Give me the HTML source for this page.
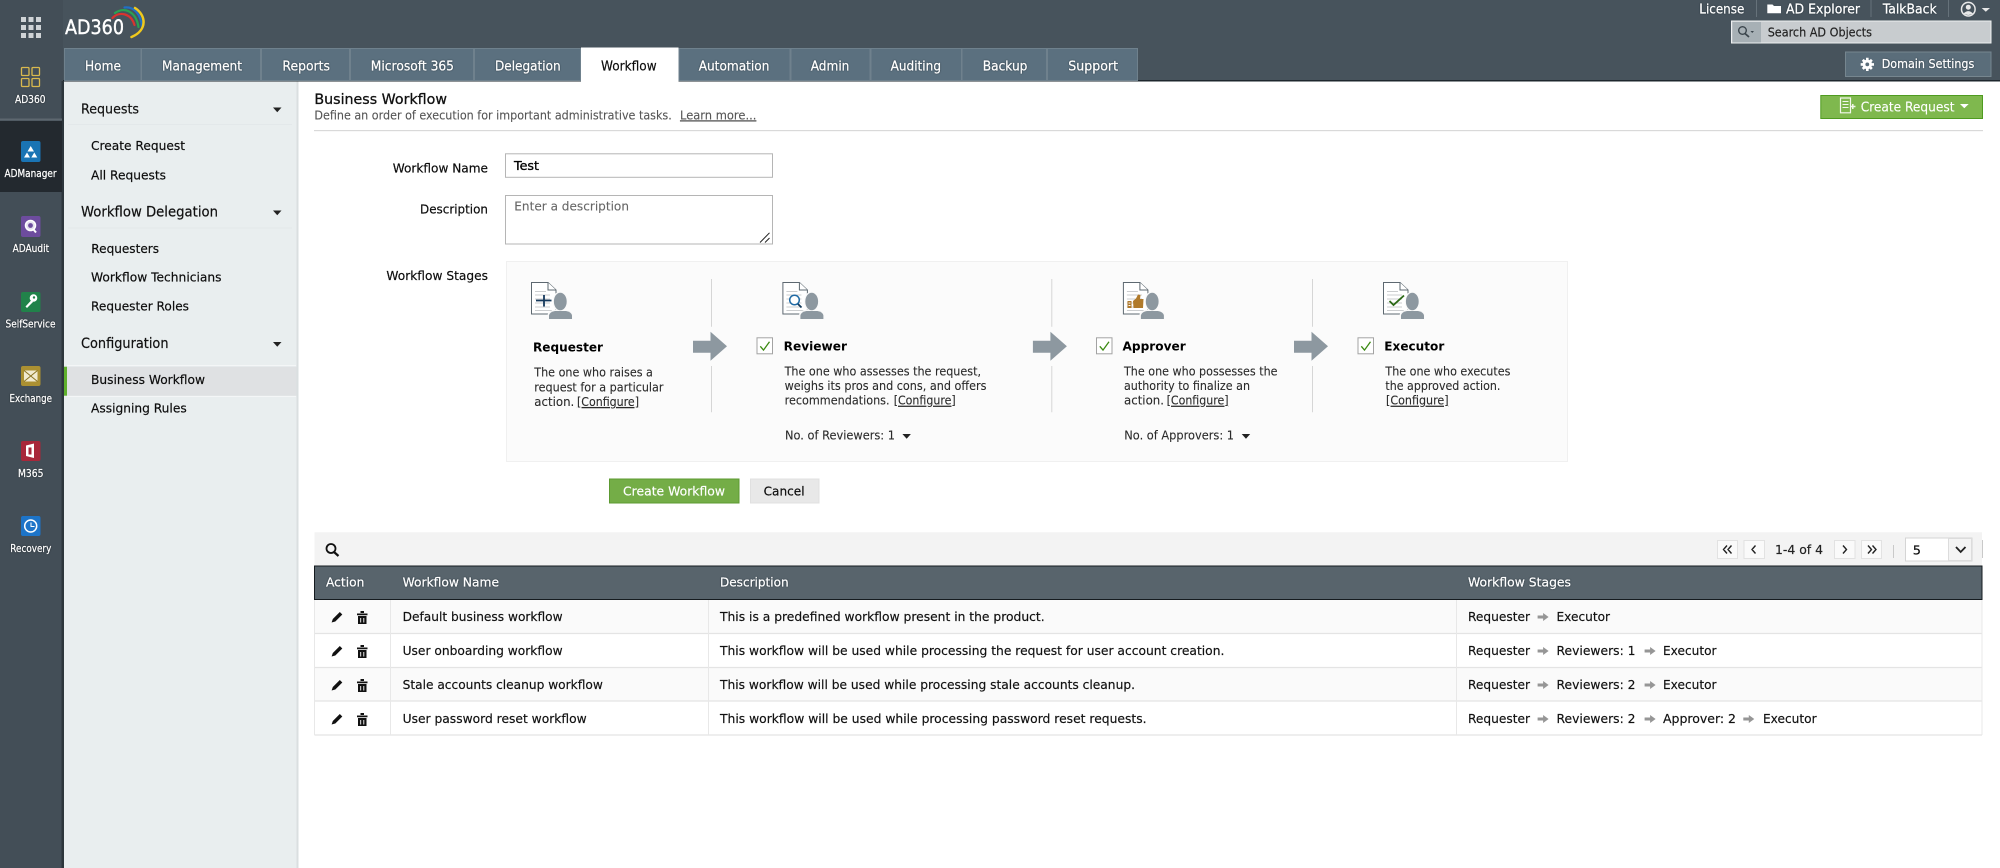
<!DOCTYPE html>
<html><head><meta charset="utf-8"><title>Business Workflow</title>
<style>
html,body{margin:0;padding:0;background:#fff;width:2000px;height:868px;overflow:hidden}
svg{display:block;filter:blur(.3px)}
text{font-family:"DejaVu Sans","Liberation Sans",sans-serif;white-space:pre}
.t{font-size:12.5px;fill:#111;stroke:#111;stroke-width:.18px}
.w{font-size:13px;fill:#fff;stroke:#fff;stroke-width:.25px;filter:drop-shadow(0 0 .7px #1d2a33)}
.r{font-size:10.5px;fill:#fff;stroke:#fff;stroke-width:.25px;filter:drop-shadow(0 0 .7px #161c20)}
.s{font-size:12.5px;fill:#0c0c0c;stroke:#0c0c0c;stroke-width:.18px}
.h{font-size:14.5px;fill:#111;stroke:#111;stroke-width:.2px}
.b{font-size:12.5px;fill:#000;font-weight:700}
.g{font-size:12px;fill:#2a2a2a;stroke:#2a2a2a;stroke-width:.1px}
.th{font-size:12.5px;fill:#fff;stroke:#fff;stroke-width:.25px;filter:drop-shadow(0 0 .7px #1d2a33)}
</style></head><body>
<svg width="2000" height="868" viewBox="0 0 2000 868" xmlns="http://www.w3.org/2000/svg">
<defs>
<g id="doc">
<path d="M.5.5H17L25 8V32H.5Z" fill="#fff" stroke="#5d6870"/><path d="M17 .5V8H25" fill="#fff" stroke="#5d6870"/>
<path d="M4 9.500H15M4 13H19M4 17H19M4 21H19M4 25H19M4 28.500H21" stroke="#cbcdcf" stroke-width="1"/>
<ellipse cx="29.300" cy="19.500" rx="7.600" ry="10" fill="#fafafa"/><path d="M16.500 38V33Q17 29 23 28H36Q41.500 29 42 33V38Z" fill="#fafafa"/>
<ellipse cx="29.300" cy="19.500" rx="6.400" ry="8.800" fill="#8d98a0"/><path d="M18 37V33.500Q18.500 30 24 29H35Q40.500 30 41 33.500V37Z" fill="#8d98a0"/>
</g>
<g id="chk"><rect x=".5" y=".5" width="15.500" height="16" fill="#fff" stroke="#a3a3a3"/><path d="M3.800 9L7 12.800L13 4.500" fill="none" stroke="#3c8a12" stroke-width="1.300"/></g>
<path id="arw" d="M0 9H17.500V0L34 14.500L17.500 29V21H0Z" fill="#8d98a0"/>
<g id="pen"><path d="M1.800 8L8.800 1L11.300 3.500L4.300 10.500L.6 11.500Z" fill="#111"/></g>
<g id="bin"><path d="M0 3.500H10.500V5.200H0ZM3.500 1H7V3H3.500ZM1 6H9.500V14H1Z" fill="#111"/><path d="M3.700 8V12.500M6.800 8V12.500" stroke="#fff" stroke-width=".9"/></g>
<path id="mini" d="M0 2.500H5.500V0L11 4L5.500 8V5.500H0Z" fill="#969696"/>
<path id="dn" d="M0 0H8.500L4.250 4.800Z" fill="#222"/>
</defs>

<!-- top bar and rail -->
<rect width="2000" height="81" fill="#47535c"/>
<rect y="80" width="2000" height="1.500" fill="#1e272d"/>
<rect y="0" width="63" height="868" fill="#434e57"/>
<rect x="61.500" y="81" width="2.500" height="787" fill="#2d363c"/>
<rect y="118.500" width="62" height="2" fill="#5d676f"/>
<rect y="121" width="62" height="71" fill="#23292f"/>

<g fill="#cfd3d6"><rect x="21" y="17" width="5" height="5"/><rect x="28.500" y="17" width="5" height="5"/><rect x="36" y="17" width="5" height="5"/><rect x="21" y="25" width="5" height="5"/><rect x="28.500" y="25" width="5" height="5"/><rect x="36" y="25" width="5" height="5"/><rect x="21" y="33" width="5" height="5"/><rect x="28.500" y="33" width="5" height="5"/><rect x="36" y="33" width="5" height="5"/></g>

<text x="65" y="34" style="font-size:19.500px;fill:#fff;stroke:#fff;stroke-width:.4px" textLength="59" lengthAdjust="spacingAndGlyphs">AD360</text>
<g fill="none" stroke-width="2.200" stroke-linecap="round">
<path d="M112.500 18C119 11 131 13 134.500 25" stroke="#d9342f"/>
<path d="M115 13C124 6.500 136 11 138.500 27" stroke="#2aa252"/>
<path d="M124.500 7.500C134 6.500 141 14 142 27" stroke="#2070c4"/>
<path d="M135 8C146 15 148 30 131.500 37" stroke="#f0c91d" stroke-width="2.500"/>
</g>

<!-- rail icons -->
<g fill="none" stroke="#d9b94e" stroke-width="1.300"><rect x="21.500" y="67.500" width="7.500" height="8" rx="1"/><rect x="32" y="67.500" width="7.500" height="8" rx="1"/><rect x="21.500" y="78.500" width="7.500" height="8" rx="1"/><rect x="32" y="78.500" width="7.500" height="8" rx="1"/></g>
<text x="15" y="103" class="r" textLength="30.500" lengthAdjust="spacingAndGlyphs">AD360</text>
<rect x="21" y="141" width="19.500" height="21" rx="2" fill="#1a74b4"/><path d="M30.700 146L34 151.500H27.500ZM27 152.500L30 157.500H24ZM34.300 152.500L37.300 157.500H31.300Z" fill="#fff"/>
<text x="4.500" y="177" class="r" textLength="52" lengthAdjust="spacingAndGlyphs">ADManager</text>
<rect x="21" y="216" width="19.500" height="21" rx="2" fill="#6d4c9e"/><circle cx="30.500" cy="225.500" r="5" fill="#e5e0ef" stroke="#fff" stroke-width="1.500"/><circle cx="30.500" cy="225.500" r="2.400" fill="#6d4c9e"/><path d="M33.500 229.500L36 232.500" stroke="#fff" stroke-width="2"/>
<text x="12.600" y="252" class="r" textLength="36.500" lengthAdjust="spacingAndGlyphs">ADAudit</text>
<rect x="21" y="292" width="19.500" height="20" rx="2" fill="#21824a"/><circle cx="33.500" cy="298" r="3.800" fill="#fff"/><path d="M31.500 300L25.500 306.500L27 308L33 302Z" fill="#fff"/><circle cx="34" cy="297.500" r="1.200" fill="#21824a"/>
<text x="5.500" y="327.700" class="r" textLength="50" lengthAdjust="spacingAndGlyphs">SelfService</text>
<rect x="21" y="366" width="19.500" height="20" rx="2" fill="#ab9032"/><rect x="24" y="370.500" width="13.500" height="11" fill="#f1ead0"/><path d="M24 370.500L37.500 381.500M37.500 370.500L24 381.500" stroke="#8a7323"/>
<text x="9.500" y="402" class="r" textLength="42.500" lengthAdjust="spacingAndGlyphs">Exchange</text>
<rect x="21" y="441" width="19.500" height="20" rx="2" fill="#a8273a"/><path d="M26 445.500L34 443.500V458L26 456Z" fill="#fff"/><rect x="28.500" y="447.500" width="3" height="7" fill="#a8273a"/>
<text x="18" y="477" class="r" textLength="25.500" lengthAdjust="spacingAndGlyphs">M365</text>
<rect x="21" y="516" width="19.500" height="20" rx="2" fill="#1d74c8"/><circle cx="30.700" cy="526" r="6" fill="none" stroke="#fff" stroke-width="1.500"/><path d="M31 522.500V526.500H34.500" fill="none" stroke="#fff"/>
<text x="10.300" y="552" class="r" textLength="41" lengthAdjust="spacingAndGlyphs">Recovery</text>

<!-- tabs -->
<g fill="#5b707f" stroke="#6f818d" stroke-width="1">
<rect x="64.500" y="48.500" width="76.500" height="32"/><rect x="141.500" y="48.500" width="119" height="32"/><rect x="261.500" y="48.500" width="88" height="32"/><rect x="350.500" y="48.500" width="123" height="32"/><rect x="474.500" y="48.500" width="106" height="32"/>
<rect x="679" y="48.500" width="111" height="32"/><rect x="791" y="48.500" width="79" height="32"/><rect x="871" y="48.500" width="90.500" height="32"/><rect x="962" y="48.500" width="84.500" height="32"/><rect x="1047.500" y="48.500" width="90" height="32"/>
</g>
<rect x="581" y="47.500" width="97.500" height="34.500" fill="#fff"/>
<text x="85" y="70.700" class="w" textLength="36" lengthAdjust="spacingAndGlyphs">Home</text>
<text x="162" y="70.700" class="w" textLength="80" lengthAdjust="spacingAndGlyphs">Management</text>
<text x="282.400" y="70.700" class="w" textLength="47.600" lengthAdjust="spacingAndGlyphs">Reports</text>
<text x="370.800" y="70.700" class="w" textLength="83.200" lengthAdjust="spacingAndGlyphs">Microsoft 365</text>
<text x="495" y="70.700" class="w" textLength="65.600" lengthAdjust="spacingAndGlyphs">Delegation</text>
<text x="601" y="70.700" class="s" style="font-size:13px" textLength="55.600" lengthAdjust="spacingAndGlyphs">Workflow</text>
<text x="698.700" y="70.700" class="w" textLength="70.700" lengthAdjust="spacingAndGlyphs">Automation</text>
<text x="810.700" y="70.700" class="w" textLength="38.700" lengthAdjust="spacingAndGlyphs">Admin</text>
<text x="890.600" y="70.700" class="w" textLength="50.400" lengthAdjust="spacingAndGlyphs">Auditing</text>
<text x="982.800" y="70.700" class="w" textLength="44.600" lengthAdjust="spacingAndGlyphs">Backup</text>
<text x="1068.300" y="70.700" class="w" textLength="49.700" lengthAdjust="spacingAndGlyphs">Support</text>

<!-- top right -->
<text x="1699.300" y="13.300" class="w" textLength="45" lengthAdjust="spacingAndGlyphs">License</text>
<path d="M1756.500 0V17M1871 0V17M1948.500 0V17" stroke="#66727a"/>
<path d="M1767.300 4.500H1772.500L1774 6H1781V13.300H1767.300Z" fill="#fff"/>
<text x="1786" y="13.300" class="w" textLength="74" lengthAdjust="spacingAndGlyphs">AD Explorer</text>
<text x="1882.700" y="13.300" class="w" textLength="54" lengthAdjust="spacingAndGlyphs">TalkBack</text>
<circle cx="1968.300" cy="9.200" r="6.800" fill="none" stroke="#e8e8e8" stroke-width="1.500"/><circle cx="1968.300" cy="7.200" r="2.500" fill="#e8e8e8"/><path d="M1963.500 13.500Q1968.300 8.800 1973 13.500Q1968.300 16.500 1963.500 13.500Z" fill="#e8e8e8"/>
<path d="M1981.700 8H1990L1985.800 11.700Z" fill="#e8e8e8"/>
<rect x="1731.500" y="21" width="259.500" height="22" fill="#c8cccf" stroke="#eef0f1"/>
<rect x="1732.500" y="22" width="28.500" height="20.500" fill="#a7b0b5"/>
<circle cx="1742.500" cy="30.500" r="3.800" fill="none" stroke="#3c464d" stroke-width="1.400"/><path d="M1745 33.500L1749 37" stroke="#3c464d" stroke-width="1.800"/><path d="M1750.500 31H1754L1752.250 33Z" fill="#3c464d"/>
<text x="1767.700" y="36.700" class="s" style="fill:#222;stroke:#222" textLength="104.300" lengthAdjust="spacingAndGlyphs">Search AD Objects</text>
<rect x="1845.500" y="52" width="145.500" height="24.500" fill="#5a6d7a" stroke="#76868f"/>
<g fill="#fff"><circle cx="1867.300" cy="64.400" r="4.800"/><path d="M1866 57.700H1868.600V71H1866ZM1860.700 63.100H1874V65.700H1860.700Z"/><path d="M1861.800 60.800L1863.700 58.900L1872.800 68L1870.900 69.900ZM1870.900 58.900L1872.800 60.800L1863.700 69.900L1861.800 68Z"/></g><circle cx="1867.300" cy="64.400" r="1.900" fill="#5a6d7a"/>
<text x="1881.700" y="68" class="w" style="font-size:12.500px" textLength="92.600" lengthAdjust="spacingAndGlyphs">Domain Settings</text>

<!-- sidebar -->
<rect x="64" y="81.500" width="233" height="787" fill="#e9eeef"/>
<rect x="296.500" y="81.500" width="2" height="787" fill="#dadfe0"/>
<text x="81" y="113.500" class="h" style="font-size:13.500px" textLength="58" lengthAdjust="spacingAndGlyphs">Requests</text>
<use href="#dn" x="273" y="107.500"/>
<path d="M68 124.500H292M68 228H292" stroke="#e3e8ea"/>
<text x="91" y="150" class="s" textLength="94" lengthAdjust="spacingAndGlyphs">Create Request</text>
<text x="91" y="179.500" class="s" textLength="75" lengthAdjust="spacingAndGlyphs">All Requests</text>
<text x="81" y="216.700" class="h" style="font-size:14px" textLength="137" lengthAdjust="spacingAndGlyphs">Workflow Delegation</text>
<use href="#dn" x="273" y="210.500"/>
<text x="91.300" y="253" class="s" textLength="67.700" lengthAdjust="spacingAndGlyphs">Requesters</text>
<text x="91" y="281.700" class="s" textLength="130.500" lengthAdjust="spacingAndGlyphs">Workflow Technicians</text>
<text x="91" y="310.700" class="s" textLength="98" lengthAdjust="spacingAndGlyphs">Requester Roles</text>
<text x="81" y="348" class="h" style="font-size:14px" textLength="87.500" lengthAdjust="spacingAndGlyphs">Configuration</text>
<use href="#dn" x="273" y="342"/>
<rect x="64" y="366.700" width="232.500" height="29" fill="#dfe1e3"/>
<rect x="64" y="366.700" width="3" height="29" fill="#5fb02c"/>
<path d="M67 365.500H296M67 396.500H296" stroke="#f4f6f7"/>
<text x="91" y="384" class="s" textLength="114" lengthAdjust="spacingAndGlyphs">Business Workflow</text>
<text x="91" y="412.700" class="s" textLength="95.700" lengthAdjust="spacingAndGlyphs">Assigning Rules</text>

<!-- header -->
<text x="314.400" y="104" class="h" style="font-size:14.500px;fill:#111;stroke-width:.3px" textLength="132.600" lengthAdjust="spacingAndGlyphs">Business Workflow</text>
<text x="314.400" y="119.300" class="g" style="fill:#555;stroke:#555" textLength="357.400" lengthAdjust="spacingAndGlyphs">Define an order of execution for important administrative tasks.</text>
<text x="680" y="119.300" class="g" style="fill:#555;stroke:#555;text-decoration:underline" textLength="76.400" lengthAdjust="spacingAndGlyphs">Learn more...</text>
<rect x="314" y="130" width="1669" height="1.200" fill="#d9d9d9"/>
<rect x="1820.800" y="95.500" width="161.700" height="23" fill="#7fb84e" stroke="#4f9b20"/>
<path d="M1840.500 98H1850.500V112.800H1840.500Z" fill="none" stroke="#f2f7ec" stroke-width="1.200"/><path d="M1842.500 101.500H1848.500M1842.500 104.500H1848.500M1842.500 107.500H1848.500" stroke="#f2f7ec"/><path d="M1850 106.500H1855.500M1852.800 104V109" stroke="#f2f7ec" stroke-width="1.500"/>
<text x="1860.700" y="111.300" class="w" style="filter:none;stroke-width:.1px" textLength="93.800" lengthAdjust="spacingAndGlyphs">Create Request</text>
<path d="M1960 104H1968.700L1964.300 108.300Z" fill="#fff"/>

<!-- form -->
<text x="392.700" y="172.700" class="s" textLength="95.300" lengthAdjust="spacingAndGlyphs">Workflow Name</text>
<rect x="505.500" y="153.800" width="267" height="23.500" fill="#fff" stroke="#b5b5b5"/>
<text x="514" y="170" class="s" style="stroke-width:.35px;fill:#000" textLength="25" lengthAdjust="spacingAndGlyphs">Test</text>
<text x="420" y="213.500" class="s" textLength="68" lengthAdjust="spacingAndGlyphs">Description</text>
<rect x="505.500" y="195.500" width="267" height="48.500" fill="#fff" stroke="#b5b5b5"/>
<text x="514.300" y="210.700" class="s" style="fill:#666;stroke:#666;stroke-width:.08px" textLength="114.700" lengthAdjust="spacingAndGlyphs">Enter a description</text>
<path d="M760 242.500L769.500 232.800M765 242.500L769.500 238" stroke="#222"/>
<text x="386.400" y="280" class="s" textLength="101.600" lengthAdjust="spacingAndGlyphs">Workflow Stages</text>

<!-- stages -->
<rect x="506.500" y="261.500" width="1061" height="200" fill="#fbfbfb" stroke="#f0f0f0"/>
<path d="M711.500 279V326.700M711.500 366V412.300M1051.800 279V326.700M1051.800 366V412.300M1312.500 279V326.700M1312.500 366V412.300" stroke="#d6d6d6"/>
<use href="#arw" x="693" y="331.700"/><use href="#arw" x="1032.900" y="331.700"/><use href="#arw" x="1294" y="331.700"/>
<use href="#doc" x="531" y="282"/>
<path d="M536 300.500H551.500M544 295V306.500" stroke="#15395c" stroke-width="1.800"/>
<use href="#doc" x="782.400" y="282"/>
<circle cx="794.500" cy="300" r="4.800" fill="#fff" stroke="#1f6aa5" stroke-width="1.500"/><path d="M798 304L801.500 307.500" stroke="#123a5c" stroke-width="1.800"/>
<use href="#doc" x="1122.900" y="282"/>
<path d="M1133 301L1136 298.500L1138 294.500L1140.500 295L1140 299H1143.500L1143 308H1133.500Z" fill="#b07a2b"/><rect x="1127.500" y="301" width="4" height="7" fill="#b07a2b"/><path d="M1128.500 303H1130.500M1128.500 305.500H1130.500" stroke="#fff"/>
<use href="#doc" x="1383" y="282"/>
<path d="M1389.500 301L1393.500 305L1404 295.500" fill="none" stroke="#2d6a17" stroke-width="1.800"/>

<text x="533" y="351.700" class="b" textLength="70" lengthAdjust="spacingAndGlyphs">Requester</text>
<text x="534.300" y="376.700" class="g" textLength="118.600" lengthAdjust="spacingAndGlyphs">The one who raises a</text>
<text x="534.300" y="391.300" class="g" textLength="129.200" lengthAdjust="spacingAndGlyphs">request for a particular</text>
<text x="534.300" y="406" class="g" textLength="40" lengthAdjust="spacingAndGlyphs">action.</text>
<text x="577" y="406" class="g" style="text-decoration:underline" textLength="62" lengthAdjust="spacingAndGlyphs">[Configure]</text>

<use href="#chk" x="756.500" y="337.300"/>
<text x="783.600" y="350.700" class="b" textLength="63.400" lengthAdjust="spacingAndGlyphs">Reviewer</text>
<text x="784.600" y="375.300" class="g" textLength="196.400" lengthAdjust="spacingAndGlyphs">The one who assesses the request,</text>
<text x="784.600" y="390" class="g" textLength="201.900" lengthAdjust="spacingAndGlyphs">weighs its pros and cons, and offers</text>
<text x="784.600" y="404.700" class="g" textLength="105" lengthAdjust="spacingAndGlyphs">recommendations.</text>
<text x="893.700" y="404.700" class="g" style="text-decoration:underline" textLength="62" lengthAdjust="spacingAndGlyphs">[Configure]</text>
<text x="785" y="439.300" class="g" textLength="110" lengthAdjust="spacingAndGlyphs">No. of Reviewers: 1</text>
<use href="#dn" x="902.400" y="434"/>

<use href="#chk" x="1096" y="337.300"/>
<text x="1122.500" y="350.700" class="b" textLength="63.200" lengthAdjust="spacingAndGlyphs">Approver</text>
<text x="1124" y="375.300" class="g" textLength="153.500" lengthAdjust="spacingAndGlyphs">The one who possesses the</text>
<text x="1124" y="390" class="g" textLength="126" lengthAdjust="spacingAndGlyphs">authority to finalize an</text>
<text x="1124" y="404.700" class="g" textLength="40" lengthAdjust="spacingAndGlyphs">action.</text>
<text x="1166.600" y="404.700" class="g" style="text-decoration:underline" textLength="62" lengthAdjust="spacingAndGlyphs">[Configure]</text>
<text x="1124.300" y="439.300" class="g" textLength="109.700" lengthAdjust="spacingAndGlyphs">No. of Approvers: 1</text>
<use href="#dn" x="1241.700" y="434"/>

<use href="#chk" x="1357.500" y="337.300"/>
<text x="1384.300" y="350.700" class="b" textLength="60" lengthAdjust="spacingAndGlyphs">Executor</text>
<text x="1385.400" y="375.300" class="g" textLength="125" lengthAdjust="spacingAndGlyphs">The one who executes</text>
<text x="1385.400" y="390" class="g" textLength="115" lengthAdjust="spacingAndGlyphs">the approved action.</text>
<text x="1386" y="404.700" class="g" style="text-decoration:underline" textLength="62.600" lengthAdjust="spacingAndGlyphs">[Configure]</text>

<!-- buttons -->
<rect x="609.500" y="479" width="129.500" height="24" fill="#74ad47" stroke="#5c9a32"/>
<text x="623" y="495.300" class="w" style="filter:none;stroke-width:.15px;font-size:12.500px" textLength="102" lengthAdjust="spacingAndGlyphs">Create Workflow</text>
<rect x="750.500" y="479" width="68.500" height="24" fill="#e8e8e8" stroke="#e0e0e0"/>
<text x="763.600" y="495.300" class="s" textLength="41" lengthAdjust="spacingAndGlyphs">Cancel</text>

<!-- table toolbar -->
<rect x="314.500" y="532.300" width="1667.500" height="33.500" fill="#f3f3f3"/>
<circle cx="331" cy="548.500" r="4.500" fill="none" stroke="#111" stroke-width="1.800"/><path d="M334 552L338.500 556" stroke="#111" stroke-width="2.200"/>
<g fill="#fafafa" stroke="#e2e2e2"><rect x="1717.500" y="540.500" width="20" height="18"/><rect x="1744" y="540.500" width="20.500" height="18"/><rect x="1834.500" y="540.500" width="20.500" height="18"/><rect x="1861.500" y="540.500" width="20" height="18"/></g>
<g fill="none" stroke="#222" stroke-width="1.400"><path d="M1727 545.500L1723.500 549.500L1727 553.500M1731.500 545.500L1728 549.500L1731.500 553.500M1755.500 545.500L1752 549.500L1755.500 553.500M1843 545.500L1846.500 549.500L1843 553.500M1868 545.500L1871.500 549.500L1868 553.500M1872.500 545.500L1876 549.500L1872.500 553.500"/></g>
<text x="1775" y="554" class="s" style="fill:#222;stroke:#222" textLength="48" lengthAdjust="spacingAndGlyphs">1-4 of 4</text>
<path d="M1893.500 545V558M1982.500 540V558" stroke="#c9c9c9"/>
<rect x="1905.500" y="538" width="66.500" height="23" fill="#fff" stroke="#d5d5d5"/>
<rect x="1948.500" y="538.500" width="23" height="22" fill="#f4f4f4" stroke="#dcdcdc"/>
<text x="1912.800" y="554.700" class="s" textLength="8.200" lengthAdjust="spacingAndGlyphs">5</text>
<path d="M1956 547L1960.700 552L1965.500 547" fill="none" stroke="#222" stroke-width="1.800"/>

<!-- table -->
<rect x="314.500" y="566" width="1667.500" height="33.500" fill="#58646c" stroke="#151b1f"/>
<text x="326" y="586.700" class="th" textLength="38.400" lengthAdjust="spacingAndGlyphs">Action</text>
<text x="402.600" y="586.700" class="th" textLength="96.400" lengthAdjust="spacingAndGlyphs">Workflow Name</text>
<text x="720" y="586.700" class="th" textLength="68.600" lengthAdjust="spacingAndGlyphs">Description</text>
<text x="1468" y="586.700" class="th" textLength="103" lengthAdjust="spacingAndGlyphs">Workflow Stages</text>
<rect x="315" y="600" width="1667" height="33" fill="#fafafa"/>
<rect x="315" y="667.500" width="1667" height="33" fill="#fafafa"/>
<path d="M314.500 633.500H1982M314.500 667.500H1982M314.500 701H1982M314.500 735H1982" stroke="#e4e4e4" stroke-width="1.200"/>
<path d="M314.500 600V735M390.500 600V735M708.500 600V735M1456.500 600V735M1982 600V735" stroke="#e8e8e8"/>

<use href="#pen" x="331" y="611"/><use href="#bin" x="357" y="610"/>
<use href="#pen" x="331" y="645"/><use href="#bin" x="357" y="644"/>
<use href="#pen" x="331" y="679"/><use href="#bin" x="357" y="678"/>
<use href="#pen" x="331" y="713"/><use href="#bin" x="357" y="712"/>

<text x="402.600" y="621" class="t" textLength="160" lengthAdjust="spacingAndGlyphs">Default business workflow</text>
<text x="402.600" y="655" class="t" textLength="160" lengthAdjust="spacingAndGlyphs">User onboarding workflow</text>
<text x="402.600" y="689" class="t" textLength="200.200" lengthAdjust="spacingAndGlyphs">Stale accounts cleanup workflow</text>
<text x="402.600" y="723" class="t" textLength="184.100" lengthAdjust="spacingAndGlyphs">User password reset workflow</text>

<text x="720" y="621" class="t" textLength="324.600" lengthAdjust="spacingAndGlyphs">This is a predefined workflow present in the product.</text>
<text x="720" y="655" class="t" textLength="504.400" lengthAdjust="spacingAndGlyphs">This workflow will be used while processing the request for user account creation.</text>
<text x="720" y="689" class="t" textLength="415" lengthAdjust="spacingAndGlyphs">This workflow will be used while processing stale accounts cleanup.</text>
<text x="720" y="723" class="t" textLength="426.600" lengthAdjust="spacingAndGlyphs">This workflow will be used while processing password reset requests.</text>

<text x="1468" y="621" class="t" textLength="62" lengthAdjust="spacingAndGlyphs">Requester</text><use href="#mini" x="1537.600" y="613"/><text x="1556.500" y="621" class="t" textLength="53.500" lengthAdjust="spacingAndGlyphs">Executor</text>

<text x="1468" y="655" class="t" textLength="62" lengthAdjust="spacingAndGlyphs">Requester</text><use href="#mini" x="1537.600" y="647"/><text x="1556.500" y="655" class="t" textLength="79" lengthAdjust="spacingAndGlyphs">Reviewers: 1</text><use href="#mini" x="1644.600" y="647"/><text x="1663" y="655" class="t" textLength="53.500" lengthAdjust="spacingAndGlyphs">Executor</text>

<text x="1468" y="689" class="t" textLength="62" lengthAdjust="spacingAndGlyphs">Requester</text><use href="#mini" x="1537.600" y="681"/><text x="1556.500" y="689" class="t" textLength="79" lengthAdjust="spacingAndGlyphs">Reviewers: 2</text><use href="#mini" x="1644.600" y="681"/><text x="1663" y="689" class="t" textLength="53.500" lengthAdjust="spacingAndGlyphs">Executor</text>

<text x="1468" y="723" class="t" textLength="62" lengthAdjust="spacingAndGlyphs">Requester</text><use href="#mini" x="1537.600" y="715"/><text x="1556.500" y="723" class="t" textLength="79" lengthAdjust="spacingAndGlyphs">Reviewers: 2</text><use href="#mini" x="1644.600" y="715"/><text x="1663" y="723" class="t" textLength="73" lengthAdjust="spacingAndGlyphs">Approver: 2</text><use href="#mini" x="1743.300" y="715"/><text x="1763" y="723" class="t" textLength="53.600" lengthAdjust="spacingAndGlyphs">Executor</text>
</svg>
</body></html>
